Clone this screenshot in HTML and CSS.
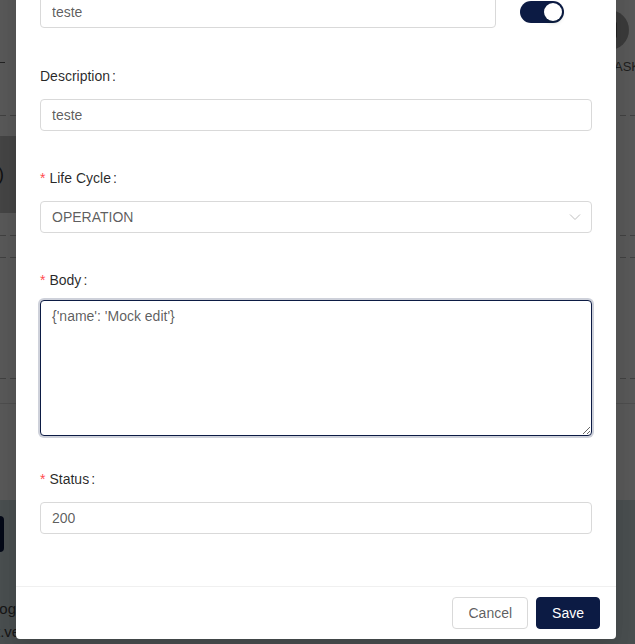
FILE: index.html
```html
<!DOCTYPE html>
<html lang="en">
<head>
<meta charset="utf-8">
<title>Edit Mock</title>
<link rel="stylesheet" href="styles.css">
</head>
<body>
  <div class="page">
    <div class="bg-top">
      <div class="bg-top-left"><span class="bg-mark"></span></div>
      <div class="bg-tab">
        <div class="bg-tab-circle">
          <svg class="bg-tab-icon" width="16" height="18" viewBox="0 0 16 18"><rect x="1.5" y="1.5" width="13" height="15" rx="1.5" fill="none" stroke="#4a4a4a" stroke-width="2.5"/></svg>
        </div>
        <span class="bg-tab-label">TASKS</span>
      </div>
    </div>
    <div class="bg-dash"></div>
    <div class="bg-gap bg-gap-20"></div>
    <div class="bg-dark-row"><span class="bg-count">10)</span></div>
    <div class="bg-gap bg-gap-22"></div>
    <div class="bg-dash"></div>
    <div class="bg-gap bg-gap-21"></div>
    <div class="bg-dash"></div>
    <div class="bg-gap bg-gap-120"></div>
    <div class="bg-dash"></div>
    <div class="bg-gap bg-gap-24"></div>
    <div class="bg-line"></div>
    <div class="bg-gap bg-gap-96"></div>
    <div class="bg-bottom">
      <span class="bg-button"></span>
      <span class="bg-text bg-text-1">Logistics</span>
      <span class="bg-text bg-text-2">t.version</span>
    </div>
  </div>

  <div class="overlay"></div>

  <div class="modal">
    <div class="modal-body">
      <div class="form-row">
        <input class="input input-name" type="text" value="teste">
        <span class="switch"><span class="switch-knob"></span></span>
      </div>

      <div class="form-item">
        <label class="form-label">Description</label>
        <input class="input" type="text" value="teste">
      </div>

      <div class="form-item">
        <label class="form-label required">Life Cycle</label>
        <div class="select">
          <span class="select-value">OPERATION</span>
          <svg class="select-arrow" width="12" height="12" viewBox="0 0 12 12"><path d="M1 3.5 L6 8.5 L11 3.5" fill="none" stroke="#bfbfbf" stroke-width="1"/></svg>
        </div>
      </div>

      <div class="form-item form-item-body">
        <label class="form-label required">Body</label>
        <textarea class="textarea">{'name': 'Mock edit'}</textarea>
      </div>

      <div class="form-item form-item-last">
        <label class="form-label required">Status</label>
        <input class="input" type="text" value="200">
      </div>
    </div>
    <div class="modal-footer">
      <button class="btn btn-default" type="button">Cancel</button>
      <button class="btn btn-primary" type="button">Save</button>
    </div>
  </div>
</body>
</html>
```

FILE: styles.css
```css
* {
  box-sizing: border-box;
}

html,
body {
  margin: 0;
  padding: 0;
}

body {
  position: relative;
  width: 635px;
  height: 644px;
  overflow: hidden;
  background: #ffffff;
  font-family: "Liberation Sans", Arial, sans-serif;
  font-size: 14px;
  color: rgba(0, 0, 0, 0.85);
}

/* ---------- background page (under the mask) ---------- */
.page {
  display: flex;
  flex-direction: column;
  height: 644px;
}

.bg-top {
  display: flex;
  justify-content: space-between;
  height: 115px;
}

.bg-top-left {
  padding-top: 62px;
}

.bg-mark {
  display: block;
  width: 5px;
  height: 1px;
  background: #666666;
}

.bg-tab {
  display: flex;
  flex-direction: column;
  align-items: flex-start;
  width: 46px;
  padding-top: 10px;
}

.bg-tab-circle {
  display: flex;
  align-items: center;
  justify-content: center;
  width: 40px;
  height: 40px;
  border-radius: 50%;
  background: #a9a9a9;
}

.bg-tab-label {
  margin-top: 9px;
  margin-left: 18px;
  font-size: 13px;
  line-height: 16px;
  color: #5a5a5a;
  white-space: nowrap;
}

.bg-dash {
  height: 1px;
  background: repeating-linear-gradient(to right, #bcbcbc 0 6px, transparent 6px 10px);
}

.bg-line {
  height: 1px;
  background: #dedede;
}

.bg-gap-20 { height: 20px; }
.bg-gap-21 { height: 21px; }
.bg-gap-22 { height: 22px; }
.bg-gap-24 { height: 24px; }
.bg-gap-96 { height: 96px; }
.bg-gap-120 { height: 120px; }

.bg-dark-row {
  display: flex;
  align-items: center;
  width: 300px;
  height: 77px;
  background: #c6c6c6;
}

.bg-count {
  margin-left: -22px;
  font-size: 18px;
  color: #333333;
}

.bg-bottom {
  display: flex;
  flex-direction: column;
  align-items: flex-start;
  flex: 1;
  padding-top: 16px;
  background: #d4e2e6;
}

.bg-button {
  display: block;
  width: 60px;
  height: 36px;
  margin-left: -56px;
  border-radius: 4px;
  background: #0c1b44;
}

.bg-text {
  font-size: 15px;
  line-height: 23px;
  color: #444444;
  white-space: nowrap;
}

.bg-text-1 {
  margin-top: 45px;
  margin-left: -9px;
}

.bg-text-2 {
  margin-left: -4px;
}

/* ---------- mask ---------- */
.overlay {
  position: absolute;
  inset: 0;
  background: rgba(0, 0, 0, 0.65);
}

/* ---------- modal ---------- */
.modal {
  position: absolute;
  top: -28px;
  left: 16px;
  width: 600px;
  background: #ffffff;
  border-radius: 4px;
  box-shadow: 0 6px 16px rgba(0, 0, 0, 0.08), 0 9px 28px 8px rgba(0, 0, 0, 0.05);
}

.modal-body {
  padding: 24px 24px 24px;
}

.form-row {
  display: flex;
  align-items: center;
  gap: 24px;
  margin-bottom: 37px;
}

.form-item {
  margin-bottom: 36px;
}

.form-item-body {
  margin-bottom: 32px;
}

.form-item-last {
  margin-bottom: 28px;
}

.form-label {
  display: block;
  margin-bottom: 12px;
  line-height: 22px;
  font-size: 14px;
  color: rgba(0, 0, 0, 0.85);
}

.form-item-body .form-label {
  margin-bottom: 9px;
}

.form-label.required::before {
  content: "*";
  display: inline-block;
  margin-right: 4px;
  color: #ff4d4f;
  font-size: 14px;
  font-family: "Liberation Sans", Arial, sans-serif;
}

.form-label::after {
  content: ":";
  margin: 0 8px 0 2px;
}

.input,
.select,
.textarea {
  display: block;
  width: 100%;
  height: 32px;
  padding: 4px 11px;
  border: 1px solid #d9d9d9;
  border-radius: 4px;
  background: #ffffff;
  font-family: "Liberation Sans", Arial, sans-serif;
  font-size: 14px;
  line-height: 22px;
  color: rgba(0, 0, 0, 0.65);
  outline: none;
}

.input-name {
  width: 456px;
  flex: none;
}

.select {
  display: flex;
  align-items: center;
  justify-content: space-between;
}

.select-arrow {
  margin-right: -1px;
}

.textarea {
  height: 136px;
  resize: vertical;
  border-color: #0c1b44;
  box-shadow: 0 0 0 2px rgba(12, 27, 68, 0.2);
}

.switch {
  position: relative;
  display: block;
  flex: none;
  width: 44px;
  height: 22px;
  border-radius: 11px;
  background: #0c1b44;
}

.switch-knob {
  position: absolute;
  top: 2px;
  left: 24px;
  width: 18px;
  height: 18px;
  border-radius: 50%;
  background: #ffffff;
  box-shadow: 0 2px 4px rgba(0, 35, 11, 0.2);
}

.modal-footer {
  display: flex;
  justify-content: flex-end;
  gap: 8px;
  padding: 10px 16px;
  border-top: 1px solid #f0f0f0;
}

.btn {
  height: 32px;
  padding: 4px 15px;
  border-radius: 4px;
  border: 1px solid #d9d9d9;
  font-family: "Liberation Sans", Arial, sans-serif;
  font-size: 14px;
  line-height: 22px;
  cursor: pointer;
}

.btn-default {
  background: #ffffff;
  color: rgba(0, 0, 0, 0.65);
}

.btn-primary {
  background: #0c1b44;
  border-color: #0c1b44;
  color: #ffffff;
}
```
